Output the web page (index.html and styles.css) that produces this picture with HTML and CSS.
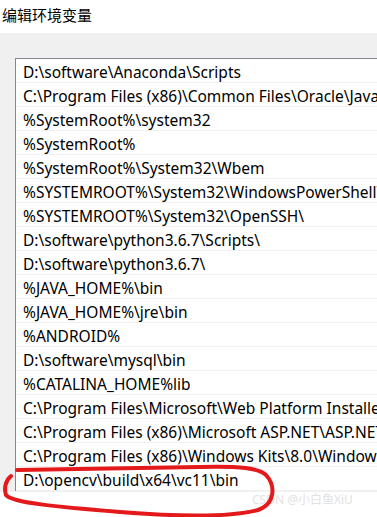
FILE: index.html
```html
<!DOCTYPE html>
<html lang="zh">

<head>
    <meta charset="UTF-8">
    <title>编辑环境变量</title>
    <link rel="stylesheet" href="styles.css">
</head>

<body>

    <header class="title-bar">
        <h1>编辑环境变量</h1>
    </header>

    <main class="panel">
        <ul class="path-list">
            <li>D:\software\Anaconda\Scripts</li>
            <li>C:\Program Files (x86)\Common Files\Oracle\Java\javapath</li>
            <li>%SystemRoot%\system32</li>
            <li>%SystemRoot%</li>
            <li>%SystemRoot%\System32\Wbem</li>
            <li>%SYSTEMROOT%\System32\WindowsPowerShell\v1.0\</li>
            <li>%SYSTEMROOT%\System32\OpenSSH\</li>
            <li>D:\software\python3.6.7\Scripts\</li>
            <li>D:\software\python3.6.7\</li>
            <li>%JAVA_HOME%\bin</li>
            <li>%JAVA_HOME%\jre\bin</li>
            <li>%ANDROID%</li>
            <li>D:\software\mysql\bin</li>
            <li>%CATALINA_HOME%lib</li>
            <li>C:\Program Files\Microsoft\Web Platform Installer\</li>
            <li>C:\Program Files (x86)\Microsoft ASP.NET\ASP.NET Web Pages\v1.0\</li>
            <li>C:\Program Files (x86)\Windows Kits\8.0\Windows Performance Toolkit\</li>
            <li>D:\opencv\build\x64\vc11\bin</li>
        </ul>
    </main>

    <div class="watermark">CSDN @小白鱼XiU</div>

    <!-- 红笔圈出新加的那一行 -->
    <svg class="marker" width="377" height="517" viewBox="0 0 377 517">
        <path d="M11 476 C5 481 4 489 6 495 C12 503 60 507 120 512 C170 516 228 518 258 510 C275 504 276 486 266 475 C259 468 240 466 200 467 L17 470"
            fill="none" stroke="#e3191b" stroke-width="4" stroke-linecap="round" stroke-linejoin="round" />
    </svg>

</body>

</html>
```

FILE: styles.css
```css
html,
body {
    margin: 0;
    height: 100%;
    overflow: hidden;
    background-color: #fff;
    font-family: "Segoe UI", "Noto Sans", "Noto Sans CJK SC", sans-serif;
}

body {
    position: relative;
}

.title-bar {
    height: 33px;
    background-color: #fff;
}

.title-bar h1 {
    margin: 0;
    padding: 5px 0 0 2px;
    font-family: "Noto Sans CJK SC", sans-serif;
    font-size: 15px;
    font-weight: normal;
    line-height: 20px;
    color: #000;
}

.panel {
    background-color: #f0f0f0;
    padding: 25px 0 1px 15px;
}

.path-list {
    list-style: none;
    margin: 0;
    padding: 0;
    background-color: #fff;
    border-top: 1px solid #828790;
    border-left: 1px solid #828790;
}

.path-list li {
    height: 21px;
    line-height: 23px;
    padding: 2px 0 0 7px;
    border-bottom: 1px solid #f0f0f0;
    font-size: 15.5px;
    color: #000;
    white-space: nowrap;
    overflow: hidden;
}

.watermark {
    position: absolute;
    left: 252px;
    top: 490px;
    font-size: 12px;
    color: #e2e2e2;
    white-space: nowrap;
}

.marker {
    position: absolute;
    left: 0;
    top: 0;
    pointer-events: none;
}
```
